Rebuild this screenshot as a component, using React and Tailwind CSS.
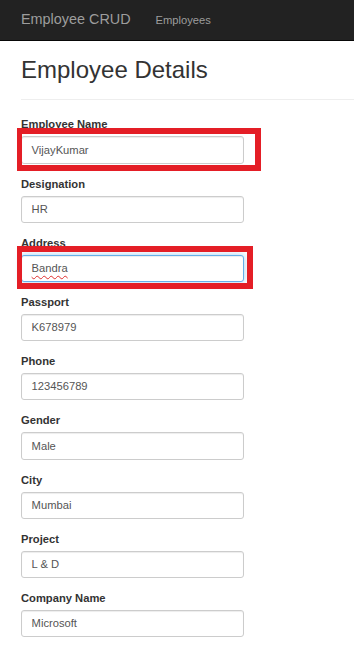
import React from 'react';

const fields = [
  { label: 'Employee Name', value: 'VijayKumar', mark: 'name' },
  { label: 'Designation', value: 'HR' },
  { label: 'Address', value: 'Bandra', mark: 'address', focused: true },
  { label: 'Passport', value: 'K678979' },
  { label: 'Phone', value: '123456789' },
  { label: 'Gender', value: 'Male' },
  { label: 'City', value: 'Mumbai' },
  { label: 'Project', value: 'L & D' },
  { label: 'Company Name', value: 'Microsoft' },
];

const Field = ({ field }) => {
  return (
    <div className="mb-[12px]">
      <div className="h-[16px] mb-[4px] text-[11.2px] leading-[16px] font-bold text-[#333]">
        {field.label}
      </div>
      <div className="relative w-[223px]">
        <div
          className={
            field.focused
              ? 'h-[27.2px] rounded-[3px] border border-[#66afe9] bg-white px-[9.6px] flex items-center text-[11.2px] text-[#555] shadow-[inset_0_1px_1px_rgba(0,0,0,0.075),0_0_6px_rgba(102,175,233,0.6)]'
              : 'h-[27.2px] rounded-[3px] border border-[#ccc] bg-white px-[9.6px] flex items-center text-[11.2px] text-[#555] shadow-[inset_0_1px_1px_rgba(0,0,0,0.075)]'
          }
        >
          <span
            className={
              field.focused
                ? 'underline decoration-wavy decoration-[#e03030] decoration-1 underline-offset-[3px]'
                : ''
            }
          >
            {field.value}
          </span>
        </div>

        {/* Highlight boxes drawn over the screenshot */}
        {field.mark === 'name' && (
          <div className="absolute left-[-4px] top-[-8px] w-[244px] h-[43px] border-[6px] border-l-[5px] border-[#e41e26] pointer-events-none" />
        )}
        {field.mark === 'address' && (
          <div className="absolute left-[-4px] top-[-9px] w-[236px] h-[43px] border-[6px] border-l-[5px] border-[#e41e26] pointer-events-none" />
        )}
      </div>
    </div>
  );
};

export default function App() {
  return (
    <div className="min-h-[668px] bg-white" style={{ fontFamily: "'Liberation Sans', Arial, sans-serif" }}>
      {/* Navbar */}
      <div className="h-[41px] bg-[#222] border-b border-[#080808] flex items-center px-[21px]">
        <span className="text-[14.4px] text-[#9d9d9d]">Employee CRUD</span>
        <span className="ml-[25px] text-[11.2px] text-[#9d9d9d]">Employees</span>
      </div>

      <div className="pl-[21px]">
        <h2 className="mt-[16px] text-[24px] leading-[26.4px] text-[#333] font-normal">
          Employee Details
        </h2>
        <div className="mt-[16px] mb-[16px] border-t border-[#eee]" />

        <div>
          {fields.map((f) => (
            <Field key={f.label} field={f} />
          ))}
        </div>
      </div>
    </div>
  );
}
